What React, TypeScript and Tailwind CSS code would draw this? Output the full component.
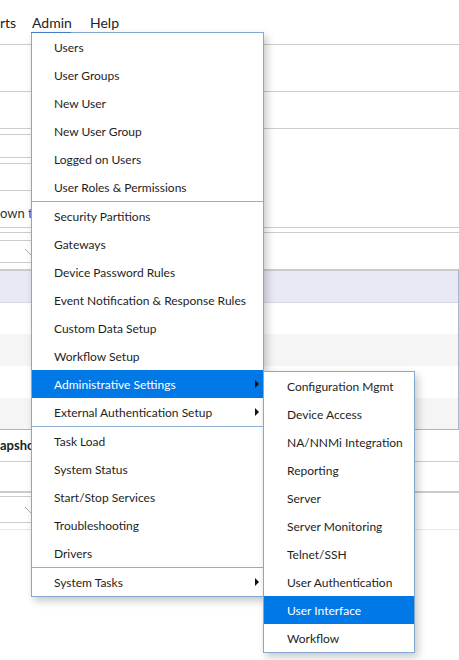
import React from "react";

type MenuEntry = { label: string; active?: boolean; sub?: boolean };

const adminGroups: MenuEntry[][] = [
  [
    { label: "Users" },
    { label: "User Groups" },
    { label: "New User" },
    { label: "New User Group" },
    { label: "Logged on Users" },
    { label: "User Roles & Permissions" },
  ],
  [
    { label: "Security Partitions" },
    { label: "Gateways" },
    { label: "Device Password Rules" },
    { label: "Event Notification & Response Rules" },
    { label: "Custom Data Setup" },
    { label: "Workflow Setup" },
    { label: "Administrative Settings", active: true, sub: true },
    { label: "External Authentication Setup", sub: true },
  ],
  [
    { label: "Task Load" },
    { label: "System Status" },
    { label: "Start/Stop Services" },
    { label: "Troubleshooting" },
    { label: "Drivers" },
  ],
  [{ label: "System Tasks", sub: true }],
];

const settingsItems: MenuEntry[] = [
  { label: "Configuration Mgmt" },
  { label: "Device Access" },
  { label: "NA/NNMi Integration" },
  { label: "Reporting" },
  { label: "Server" },
  { label: "Server Monitoring" },
  { label: "Telnet/SSH" },
  { label: "User Authentication" },
  { label: "User Interface", active: true },
  { label: "Workflow" },
];

const MenuItem = ({ item, indent }: { item: MenuEntry; indent: string }) => (
  <div
    className={`h-[28px] flex items-center pt-[2px] pr-[4px] ${indent} ${
      item.active ? "bg-[#0078e6] text-white" : "text-[#1e1e1e]"
    }`}
  >
    <span className="flex-1 whitespace-nowrap">{item.label}</span>
    {item.sub && (
      <span className="-mt-[2px] w-0 h-0 border-y-[4px] border-y-transparent border-l-[4px] border-l-[#111]" />
    )}
  </div>
);

const Chevron = () => (
  <svg width="6" height="6" viewBox="0 0 6 6" className="text-[#aaa]">
    <path d="M0 0 L6 6" stroke="currentColor" strokeWidth="1" />
  </svg>
);

export default function App() {
  return (
    <div className="relative w-[459px] h-[660px] overflow-hidden bg-white font-['Lato',sans-serif] text-[#222]">
      {/* top navigation */}
      <div className="h-[45px] border-b border-[#cccccc] flex pt-[15px] text-[14px] leading-[15px]">
        <span className="w-[32px]">rts</span>
        <span className="w-[58px]">Admin</span>
        <span>Help</span>
      </div>
      <div className="h-[47px] border-b border-[#cccccc]" />
      <div className="h-[37px] border-b border-[#cccccc]" />

      {/* left form column */}
      <div className="h-[98px] w-[220px] pt-[5px] flex flex-col">
        <div className="h-[24px] border-y border-[#cccccc]" />
        <div className="mt-[5px] h-[28px] border-y border-[#cccccc]" />
        <div className="mt-[14px] text-[13px] leading-[16px] text-[#333] whitespace-nowrap">
          own <span className="text-[#6b2c91]">to</span>
        </div>
      </div>
      <div className="h-[6px] border-y border-[#cccccc]" />
      <div className="mt-[7px] h-[23px] w-[220px] border-y border-[#cccccc] flex items-center pl-[25px]">
        <Chevron />
      </div>

      {/* table */}
      <div className="mt-[6px] border-r border-b border-[#a9b6c8]">
        <div className="h-[34px] border-t-2 border-b border-t-[#cccccc] border-b-[#d8d8e4] bg-[#e9e9f5]" />
        <div className="h-[31px] bg-white" />
        <div className="h-[32px] bg-[#f5f5f5]" />
        <div className="h-[32px] bg-white" />
        <div className="h-[31px] bg-[#f5f5f5]" />
      </div>

      <div className="h-[32px] border-b border-[#cccccc] flex items-center text-[13px] font-bold text-[#222] whitespace-nowrap">
        apshot
      </div>
      <div className="h-[31px] border-b-2 border-[#cccccc]" />
      <div className="mt-[3px] h-[27px] w-[220px] border-y border-[#cccccc] flex items-center pl-[25px]">
        <Chevron />
      </div>
      <div className="mt-[6px] h-px bg-[#e6e6f6]" />

      {/* Admin dropdown menu */}
      <div className="absolute left-[31px] top-[32px] w-[233px] bg-white border border-[#83a9d3] text-[12px] shadow-[3px_4px_8px_rgba(0,0,0,0.22)]">
        <div className="absolute -top-px -left-px w-[40px] h-px bg-[#3f7cc4]" />
        {adminGroups.map((group, gi) => (
          <div key={gi} className={gi > 0 ? "border-t border-[#8eaed3]" : ""}>
            {group.map((item) => (
              <MenuItem key={item.label} item={item} indent="pl-[22px]" />
            ))}
          </div>
        ))}
      </div>

      {/* Administrative Settings submenu */}
      <div className="absolute left-[263px] top-[371px] w-[152px] bg-white border border-[#83a9d3] text-[12px] shadow-[3px_4px_8px_rgba(0,0,0,0.22)]">
        {settingsItems.map((item) => (
          <MenuItem key={item.label} item={item} indent="pl-[23px]" />
        ))}
      </div>
    </div>
  );
}
